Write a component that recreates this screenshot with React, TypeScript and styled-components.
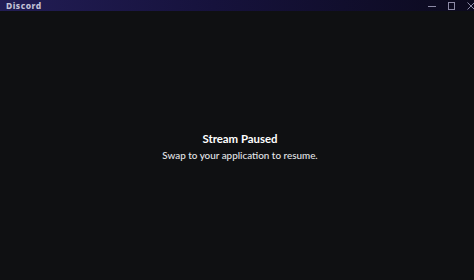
import styled, { createGlobalStyle } from 'styled-components'

const Global = createGlobalStyle`
html, body {
  margin: 0;
  padding: 0;
  background: #0f1012;
}
#root {
  height: 280px;
}
`

const App = () => {
    return (
        <Window>
            <Global />
            <TitleBar>
                <Title>Discord</Title>
                <Controls>
                    <Ctl w={8}>
                        <svg width="8" height="8" viewBox="0 0 8 8">
                            <path d="M0 4.5h8" stroke="#8d8aa6" strokeWidth="1" />
                        </svg>
                    </Ctl>
                    <Ctl w={7}>
                        <svg width="7" height="8" viewBox="0 0 7 8">
                            <rect x="0.5" y="0.5" width="6" height="7" fill="none" stroke="#8d8aa6" strokeWidth="1" />
                        </svg>
                    </Ctl>
                    <Ctl w={8}>
                        <svg width="8" height="8" viewBox="0 0 8 8">
                            <path d="M0.5 0.5l7 7M7.5 0.5l-7 7" stroke="#8d8aa6" strokeWidth="1" />
                        </svg>
                    </Ctl>
                </Controls>
            </TitleBar>
            <Stage>
                <Message>
                    <Heading>Stream Paused</Heading>
                    <Sub>Swap to your application to resume.</Sub>
                </Message>
            </Stage>
        </Window>
    )
}

export default App

const Window = styled.div`
width: 474px;
height: 280px;
display: flex;
flex-direction: column;
background: #0f1012;
font-family: "Lato", "Noto Sans", sans-serif;
overflow: hidden;
`

const TitleBar = styled.div`
height: 11px;
flex: none;
display: flex;
align-items: center;
justify-content: space-between;
padding-left: 6px;
background: linear-gradient(90deg, #221d55 0%, #16123c 45%, #0c0a1e 100%);
`

const Title = styled.span`
font-family: "Noto Sans", sans-serif;
font-size: 8.5px;
font-weight: 800;
color: #c3c1d6;
letter-spacing: 0.5px;
line-height: 11px;
`

const Controls = styled.div`
display: flex;
align-items: center;
gap: 12px;
margin-right: -1px;
`

const Ctl = styled.div<{ w: number }>`
width: ${(p) => p.w}px;
height: 8px;
display: flex;
`

const Stage = styled.div`
flex: 1;
display: flex;
justify-content: center;
padding-top: 121px;
padding-left: 6px;
`

const Message = styled.div`
display: flex;
flex-direction: column;
align-items: center;
gap: 3px;
`

const Heading = styled.div`
font-size: 11.4px;
font-weight: 700;
color: #ffffff;
line-height: 14px;
`

const Sub = styled.div`
font-size: 9.9px;
font-weight: 500;
color: #e3e5e8;
line-height: 13px;
`
